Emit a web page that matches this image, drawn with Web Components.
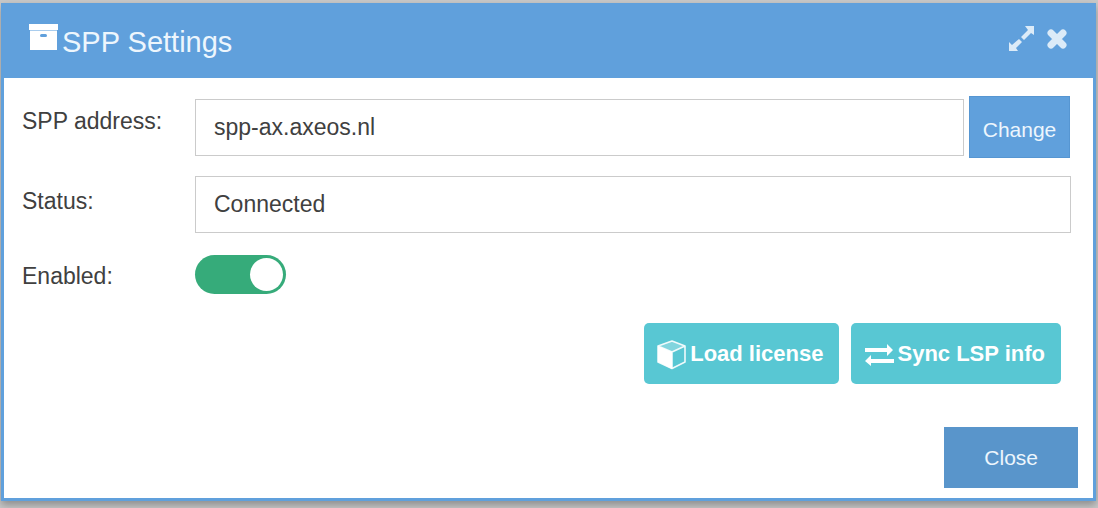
<!DOCTYPE html>
<html lang="en">
<head>
<meta charset="utf-8">
<title>SPP Settings</title>
<style>
  body { margin: 0; padding: 3px 2px 7px 1px; background: #c9c9c9; font-family: "Liberation Sans", Arial, sans-serif; color: #404040; }
</style>
</head>
<body>
<settings-dialog heading="SPP Settings">
  <field-row label="SPP address:" value="spp-ax.axeos.nl"><push-button slot="action" kind="change">Change</push-button></field-row>
  <field-row label="Status:" value="Connected"></field-row>
  <toggle-row label="Enabled:"></toggle-row>
  <push-button slot="tools" kind="tool"><ui-icon slot="icon" name="cube"></ui-icon>Load license</push-button>
  <push-button slot="tools" kind="tool"><ui-icon slot="icon" name="sync"></ui-icon>Sync LSP info</push-button>
  <push-button slot="footer" kind="close">Close</push-button>
</settings-dialog>
<script>
const icons = {
  archive: [30, 28, '<path fill="#fff" d="M0 0h29v6H0zM1 6h27v20H1z"/><path stroke="#a9cdee" d="M1 6.5h27"/><rect x="11" y="10" width="7" height="3" rx="1.5" fill="#60a0dc"/>'],
  expand: [26, 26, '<path fill="#dcebf8" d="M16 0h9v9l-3-2-7 7-3-3 7-7zM10 13l3 3-6 6 2 3H0v-9l3 3z"/>'],
  cross: [20, 20, '<path stroke="#dcebf8" stroke-width="7" stroke-linecap="round" d="M4 4l12 12M16 4L4 16"/>'],
  cube: [30, 30, '<path fill="#fff" fill-opacity=".25" d="M15 1l13 5-13 6L2 6z"/><path fill="#fff" d="M1 6l14 6v17L1 22z"/><path fill="none" stroke="#fff" stroke-opacity=".9" stroke-width="1.6" stroke-linejoin="round" d="M15 1l13 5v16l-13 6.5L1 22V6zM1 6l14 6 13-6M15 12v16"/>'],
  sync: [30, 22, '<path fill="#fff" d="M1 4h22V0l6 6-6 6V8H1zM30 15H7v-4l-6 6 6 5v-3h23z"/>']
};

class UiIcon extends HTMLElement {
  connectedCallback() {
    const [w, h, art] = icons[this.getAttribute('name')];
    this.attachShadow({ mode: 'open' }).innerHTML =
      `<style>:host{display:block;flex:none}svg{display:block}</style>
       <svg width="${w}" height="${h}" viewBox="0 0 ${w} ${h}" fill="none" aria-hidden="true">${art}</svg>`;
  }
}
customElements.define('ui-icon', UiIcon);

class PushButton extends HTMLElement {
  connectedCallback() {
    this.attachShadow({ mode: 'open' }).innerHTML = `
      <style>
        :host { display: block; flex: none; }
        button { display: flex; align-items: center; justify-content: center; box-sizing: border-box; width: 100%; margin: 0; border: 0; color: #edf6fd; font: 21px/24px "Liberation Sans", Arial, sans-serif; cursor: pointer; white-space: nowrap; }
        :host([kind=change]) button { min-width: 101px; height: 62px; padding: 5px 12px 0; border: 1px solid #5696d2; background: #60a0dc; }
        :host([kind=tool]) button { height: 61px; padding: 0 16px 0 13px; gap: 3px; border-radius: 5px; background: #58c7d3; color: #fff; font-size: 22px; font-weight: bold; }
        :host([kind=close]) button { height: 61px; padding: 0 40px; background: #5995cb; }
        ::slotted(ui-icon) { padding-top: 2px; }
      </style>
      <button type="button"><slot name="icon"></slot><slot></slot></button>`;
  }
}
customElements.define('push-button', PushButton);

class FieldRow extends HTMLElement {
  connectedCallback() {
    this.attachShadow({ mode: 'open' }).innerHTML = `
      <style>
        :host { display: grid; grid-template-columns: 173px 1fr auto; align-items: center; font-size: 23px; line-height: 26px; }
        label { align-self: start; padding-top: 12px; }
        input { box-sizing: border-box; width: 100%; min-width: 0; height: 57px; margin: 0; padding: 0 18px; border: 1px solid #cbcbcb; border-radius: 0; background: #fff; color: inherit; font: inherit; outline: none; }
        ::slotted(*) { margin: 0 1px 0 5px; }
      </style>
      <label for="field"></label><input id="field" type="text" readonly><slot name="action"></slot>`;
    this.shadowRoot.querySelector('label').textContent = this.getAttribute('label');
    this.shadowRoot.querySelector('input').value = this.getAttribute('value');
  }
}
customElements.define('field-row', FieldRow);

class ToggleRow extends HTMLElement {
  connectedCallback() {
    this.attachShadow({ mode: 'open' }).innerHTML = `
      <style>
        :host { display: grid; grid-template-columns: 173px 1fr; align-items: center; margin-top: 4px; font-size: 23px; line-height: 26px; }
        label { padding-top: 2px; }
        input { appearance: none; display: flex; box-sizing: border-box; width: 91px; height: 39px; margin: 0; padding: 3px; border-radius: 20px; background: #36ab7a; cursor: pointer; }
        input::before { content: ""; width: 33px; height: 33px; border-radius: 50%; background: #fff; }
        input:checked { justify-content: flex-end; }
        input:not(:checked) { background: #bbb; }
      </style>
      <label for="toggle"></label><input id="toggle" type="checkbox" role="switch" checked>`;
    this.shadowRoot.querySelector('label').textContent = this.getAttribute('label');
  }
}
customElements.define('toggle-row', ToggleRow);

class SettingsDialog extends HTMLElement {
  connectedCallback() {
    this.attachShadow({ mode: 'open' }).innerHTML = `
      <style>
        :host { display: block; border: 3px solid #60a0dc; border-top: 0; background: #fff; box-shadow: 0 4px 8px rgba(0,0,0,.3); }
        header { display: flex; align-items: center; height: 75px; padding: 0 26px 0 25px; background: #60a0dc; color: #edf6fd; }
        h1 { flex: 1; margin: 0; padding: 3px 0 0 3px; font-size: 29px; line-height: 34px; font-weight: normal; }
        header > ui-icon { padding-bottom: 6px; }
        .actions { display: flex; align-items: center; gap: 12px; padding-bottom: 3px; }
        .actions button { display: block; margin: 0; padding: 0; border: 0; background: none; cursor: pointer; }
        main { display: flex; flex-direction: column; gap: 18px; padding: 18px 22px 0 18px; }
        .tools { display: flex; justify-content: flex-end; gap: 12px; padding: 29px 32px 0 0; }
        footer { display: flex; justify-content: flex-end; padding: 43px 15px 10px 0; }
      </style>
      <header>
        <ui-icon name="archive"></ui-icon><h1></h1>
        <div class="actions">
          <button type="button" aria-label="Expand"><ui-icon name="expand"></ui-icon></button>
          <button type="button" aria-label="Close dialog"><ui-icon name="cross"></ui-icon></button>
        </div>
      </header>
      <main><slot></slot></main>
      <div class="tools"><slot name="tools"></slot></div>
      <footer><slot name="footer"></slot></footer>`;
    this.shadowRoot.querySelector('h1').textContent = this.getAttribute('heading');
  }
}
customElements.define('settings-dialog', SettingsDialog);
</script>
</body>
</html>
